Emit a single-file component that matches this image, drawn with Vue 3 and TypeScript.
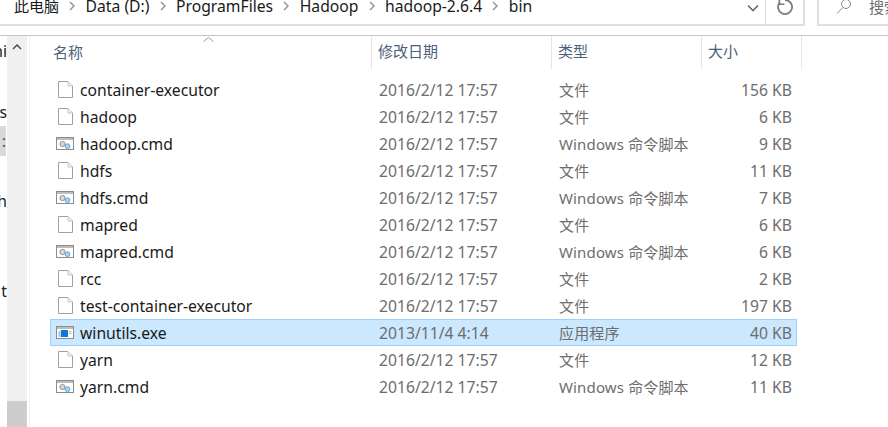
<script setup lang="ts">
interface FileRow {
  name: string
  date: string
  type: string
  size: string
  icon: 'file' | 'cmd' | 'exe'
  selected?: boolean
}

const crumbs = ['此电脑', 'Data (D:)', 'ProgramFiles', 'Hadoop', 'hadoop-2.6.4', 'bin']
const stamp = '2016/2/12 17:57'
const cmdType = 'Windows 命令脚本'

const files: FileRow[] = [
  { name: 'container-executor', date: stamp, type: '文件', size: '156 KB', icon: 'file' },
  { name: 'hadoop', date: stamp, type: '文件', size: '6 KB', icon: 'file' },
  { name: 'hadoop.cmd', date: stamp, type: cmdType, size: '9 KB', icon: 'cmd' },
  { name: 'hdfs', date: stamp, type: '文件', size: '11 KB', icon: 'file' },
  { name: 'hdfs.cmd', date: stamp, type: cmdType, size: '7 KB', icon: 'cmd' },
  { name: 'mapred', date: stamp, type: '文件', size: '6 KB', icon: 'file' },
  { name: 'mapred.cmd', date: stamp, type: cmdType, size: '6 KB', icon: 'cmd' },
  { name: 'rcc', date: stamp, type: '文件', size: '2 KB', icon: 'file' },
  { name: 'test-container-executor', date: stamp, type: '文件', size: '197 KB', icon: 'file' },
  { name: 'winutils.exe', date: '2013/11/4 4:14', type: '应用程序', size: '40 KB', icon: 'exe', selected: true },
  { name: 'yarn', date: stamp, type: '文件', size: '12 KB', icon: 'file' },
  { name: 'yarn.cmd', date: stamp, type: cmdType, size: '11 KB', icon: 'cmd' },
]
</script>

<template>
  <div class="window">
    <!-- Address bar -->
    <div class="toolbar">
      <div class="address">
        <div class="crumbs">
          <template v-for="(c, i) in crumbs" :key="c">
            <svg v-if="i > 0" class="sep" width="6" height="10" viewBox="0 0 6 10">
              <path d="M1 1l4 4-4 4" fill="none" stroke="#909090" stroke-width="1.4" />
            </svg>
            <span class="crumb">{{ c }}</span>
          </template>
        </div>
        <div class="drop">
          <svg width="12" height="8" viewBox="0 0 12 8">
            <path d="M1 1.5l5 5 5-5" fill="none" stroke="#6a6a6a" stroke-width="1.6" />
          </svg>
        </div>
        <div class="refresh">
          <svg width="18" height="18" viewBox="0 0 18 18">
            <path d="M9 0A7 7 0 1 1 3.8 2.4" fill="none" stroke="#7a7a7a" stroke-width="1.8" />
            <path d="M3.4 -1v5.2h5" fill="none" stroke="#7a7a7a" stroke-width="1.6" />
          </svg>
        </div>
      </div>
      <div class="search">
        <svg width="16" height="16" viewBox="0 0 16 16">
          <circle cx="10" cy="4" r="4.5" fill="none" stroke="#8a8a8a" />
          <path d="M6.8 7.5L1 13.5" stroke="#8a8a8a" fill="none" />
        </svg>
        <span class="search-text">搜索</span>
      </div>
    </div>

    <div class="body">
      <!-- Clipped navigation pane -->
      <aside class="nav">
        <span class="nav-item">ni</span>
        <span class="nav-item nav-s">s</span>
        <span class="nav-item nav-active">:</span>
        <span class="nav-item nav-h">h</span>
        <span class="nav-item nav-t">t</span>
      </aside>
      <div class="scrollbar">
        <svg class="arrow" width="10" height="6" viewBox="0 0 10 6">
          <path d="M1 5l4-4 4 4" fill="none" stroke="#505050" stroke-width="1.5" />
        </svg>
        <div class="thumb"></div>
      </div>

      <!-- Details view -->
      <main class="list">
        <div class="head">
          <svg class="sort" width="11" height="5" viewBox="0 0 11 5">
            <path d="M.5 4.5l5-4 5 4" fill="none" stroke="#9a9a9a" />
          </svg>
          <div class="cell name head-cell">名称</div>
          <div class="cell head-cell">修改日期</div>
          <div class="cell head-cell">类型</div>
          <div class="cell head-cell">大小</div>
        </div>
        <div class="rows">
          <div v-for="f in files" :key="f.name" class="row" :class="{ selected: f.selected }">
            <div class="cell name">
              <svg v-if="f.icon === 'file'" class="icon" width="15" height="17" viewBox="0 0 15 17">
                <path d="M.5 .5h9.5l4.5 4.5v11.5h-14z" fill="#fff" stroke="#a0a0a0" />
                <path d="M10 .5v4.5h4.5" fill="#f2f2f2" stroke="#c4c4c4" />
              </svg>
              <svg v-else-if="f.icon === 'cmd'" class="icon wide" width="18" height="13" viewBox="0 0 18 13">
                <rect x=".5" y=".5" width="17" height="12" fill="#fff" stroke="#8c8c8c" />
                <rect x="1" y="1" width="16" height="2" fill="#bdbdbd" />
                <circle cx="6.5" cy="7" r="2.6" fill="#d8d8d8" stroke="#8f8f8f" />
                <circle cx="11.5" cy="9.2" r="2.4" fill="#a9d3f0" stroke="#6aa6d6" />
              </svg>
              <svg v-else class="icon wide" width="18" height="13" viewBox="0 0 18 13">
                <rect x=".5" y=".5" width="17" height="12" fill="#fff" stroke="#8c8c8c" />
                <rect x="1" y="1" width="16" height="2" fill="#bdbdbd" />
                <rect x="2.5" y="5" width="2" height="6" fill="#9cc4e4" />
                <rect x="5" y="4" width="7" height="7" fill="#0f78d4" />
                <rect x="13" y="5" width="2.5" height="1" fill="#b0b0b0" />
                <rect x="13" y="7" width="2.5" height="1" fill="#b0b0b0" />
              </svg>
              <span class="file-name">{{ f.name }}</span>
            </div>
            <div class="cell meta">{{ f.date }}</div>
            <div class="cell meta type">{{ f.type }}</div>
            <div class="cell meta size">{{ f.size }}</div>
          </div>
        </div>
      </main>
    </div>
  </div>
</template>

<style>
html,
body {
  margin: 0;
  background: #fff;
  overflow: hidden;
}
</style>

<style scoped>
.window {
  width: 888px;
  height: 427px;
  overflow: hidden;
  display: flex;
  flex-direction: column;
  font-family: "Noto Sans", "Noto Sans CJK SC", sans-serif;
  font-size: 15.7px;
  background: #fff;
}
.toolbar {
  height: 36px;
  flex: none;
  display: flex;
  box-sizing: border-box;
  border-bottom: 1px solid #c4c4c4;
}
.address {
  width: 805px;
  height: 26px;
  flex: none;
  display: flex;
  box-sizing: border-box;
  border-bottom: 2px solid #dedede;
  border-right: 2px solid #dedede;
}
.crumbs {
  flex: 1;
  display: flex;
  align-items: center;
  height: 12px;
  padding-left: 14px;
  gap: 10.3px;
  color: #1a1a1a;
}
.crumb {
  line-height: 12px;
  white-space: nowrap;
}
.crumb:first-child {
  font-size: 15px;
}
.sep {
  flex: none;
}
.drop {
  width: 24px;
  height: 15px;
  display: flex;
  align-items: center;
  justify-content: center;
}
.refresh {
  width: 38px;
  height: 24px;
  box-sizing: border-box;
  border-left: 1px solid #dedede;
  display: flex;
  justify-content: center;
  overflow: hidden;
}
.search {
  margin-left: 12px;
  flex: 1;
  height: 26px;
  box-sizing: border-box;
  border-left: 2px solid #dedede;
  border-bottom: 2px solid #dedede;
  display: flex;
  padding-left: 17px;
  gap: 17px;
  color: #6d6d6d;
}
.search-text {
  font-size: 15px;
  line-height: 14px;
  white-space: nowrap;
}
.body {
  flex: 1;
  min-height: 0;
  display: flex;
}
.nav {
  width: 7px;
  flex: none;
  overflow: hidden;
  position: relative;
  color: #222;
}
.nav-item {
  position: absolute;
  right: 0;
  line-height: 18px;
}
.nav-item:nth-child(1) { top: 6px; }
.nav-s { top: 67px; }
.nav-active {
  top: 90px;
  left: 0;
  width: 6px;
  height: 30px;
  line-height: 30px;
  background: #d9d9d9;
  color: #2a5d8a;
  text-align: right;
}
.nav-h { top: 156px; }
.nav-t { top: 246px; }
.scrollbar {
  width: 20px;
  flex: none;
  background: #f0f0f0;
  position: relative;
}
.arrow {
  position: absolute;
  top: 8px;
  left: 5px;
}
.thumb {
  position: absolute;
  left: 0;
  right: 0;
  bottom: 0;
  height: 26px;
  background: #cdcdcd;
}
.list {
  flex: 1;
  min-width: 0;
  margin-left: 2px;
  border-left: 1px solid #f2f2f2;
}
.head {
  display: grid;
  grid-template-columns: 322px 180px 150px 100px;
  margin-left: 20px;
  width: 752px;
  height: 33px;
  position: relative;
  margin-bottom: 7px;
}
.sort {
  position: absolute;
  left: 153px;
  top: 1px;
}
.head-cell {
  color: #4c607a;
  font-size: 15px;
  line-height: 31px;
  border-right: 1px solid #e5e5e5;
  box-sizing: border-box;
  padding-left: 6px;
}
.head-cell.name {
  padding-left: 3px;
}
.row {
  display: grid;
  grid-template-columns: 322px 180px 150px 93px;
  margin-left: 20px;
  width: 747px;
  height: 27px;
  line-height: 26px;
  box-sizing: border-box;
  border: 1px solid transparent;
}
.row .cell {
  white-space: nowrap;
}
.selected {
  background: #cce8ff;
  border-color: #99d1ff;
}
.name {
  display: flex;
  align-items: center;
}
.row .name {
  position: relative;
  padding-left: 29px;
  color: #1a1a1a;
}
.row .icon {
  position: absolute;
  left: 7px;
  top: 4px;
}
.row .icon.wide {
  left: 5px;
  top: 6px;
}
.meta {
  color: #6d6d6d;
  padding-left: 6px;
}
.type {
  font-size: 15px;
  letter-spacing: 0.15px;
}
.size {
  text-align: right;
  padding-right: 4px;
  padding-left: 0;
}
</style>
